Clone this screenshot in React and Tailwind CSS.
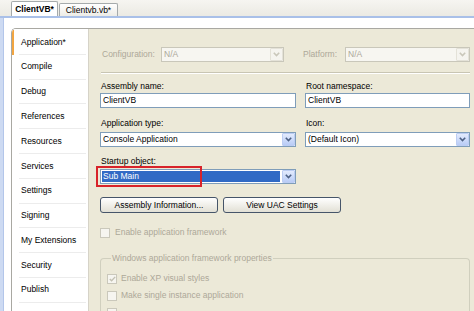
import React from 'react';

const navItems = [
  'Application*',
  'Compile',
  'Debug',
  'References',
  'Resources',
  'Services',
  'Settings',
  'Signing',
  'My Extensions',
  'Security',
  'Publish',
];

function Chevron({ color }) {
  return (
    <svg width="7" height="5" viewBox="0 0 7 5">
      <path d="M0.8 0.8 L3.5 3.6 L6.2 0.8" fill="none" stroke={color} strokeWidth="1.6" />
    </svg>
  );
}

function ArrowButton({ disabled }) {
  return (
    <div
      className={`flex w-[13px] items-center justify-center rounded-[1px] border ${
        disabled
          ? 'border-[#e4e2d8] bg-[#f5f4ef]'
          : 'border-[#bccdf3] bg-gradient-to-b from-[#e3ebfd] to-[#b9ccf6]'
      }`}
    >
      <Chevron color={disabled ? '#c9c7ba' : '#4d6185'} />
    </div>
  );
}

function Combo({ value, disabled, selected, className = '' }) {
  return (
    <div
      className={`flex h-[15px] items-stretch border ${
        disabled ? 'border-[#c9c7ba] bg-[#f7f6f1] text-[#aca899]' : 'border-[#7f9db9] bg-white'
      } ${className}`}
    >
      <div
        className={`flex flex-1 items-center ${
          selected ? 'm-[1px] mr-[2px] bg-[#316ac5] pl-[1px] text-white' : 'pl-[2px]'
        }`}
      >
        {value}
      </div>
      <ArrowButton disabled={disabled} />
    </div>
  );
}

function TextBox({ value }) {
  return (
    <div className="flex h-[15px] items-center border border-[#7f9db9] bg-white pl-[2px]">
      {value}
    </div>
  );
}

function Label({ children, className = '' }) {
  return <div className={`h-[11px] pl-[1px] leading-[11px] ${className}`}>{children}</div>;
}

function CheckBox({ checked }) {
  return (
    <div className="flex h-[10px] w-[10px] items-center justify-center border border-[#cac8bb] bg-[#f6f5f0]">
      {checked && (
        <svg width="7" height="6" viewBox="0 0 7 6">
          <path d="M0.8 3 L2.6 4.8 L6.2 0.9" fill="none" stroke="#c3c1b3" strokeWidth="1.4" />
        </svg>
      )}
    </div>
  );
}

function CheckRow({ label, checked, className = '' }) {
  return (
    <div className={`flex h-[11px] items-center gap-[4px] text-[#aca899] ${className}`}>
      <CheckBox checked={checked} />
      {label && <span className="leading-[11px]">{label}</span>}
    </div>
  );
}

function XPButton({ children }) {
  return (
    <div className="flex h-[16px] w-[118px] items-center justify-center rounded-[3px] border border-[#465569] bg-gradient-to-b from-white to-[#e2e0d5]">
      {children}
    </div>
  );
}

export default function App() {
  return (
    <div className="relative h-[311px] w-[474px] overflow-hidden bg-white font-['Liberation_Sans',Arial,sans-serif] text-[8.5px] text-black">
      {/* document tabs */}
      <div className="flex h-[16px] items-end gap-[1px] bg-gradient-to-b from-[#f6f5f1] to-[#ebeae3] pl-[11px]">
        <div className="flex h-[15px] w-[47px] items-center justify-center rounded-t-[2px] border border-b-0 border-[#a5aaab] bg-white font-bold">
          ClientVB*
        </div>
        <div className="flex h-[13px] w-[59px] items-center justify-center rounded-t-[2px] border border-b-0 border-[#a5aaab] bg-gradient-to-b from-white to-[#edece6]">
          Clientvb.vb*
        </div>
      </div>
      <div className="h-[2px] bg-[#a9c0e8]" />

      <div className="flex h-[293px]">
        <div className="w-[4px] border-r border-[#b3c6ea] bg-[#cddaf2]" />
        <div className="flex flex-1 flex-col pl-[7px] pt-[10px]">
          <div className="flex flex-1 overflow-hidden rounded-tl-[5px] border-l border-t border-[#a9a8a2]">
            {/* left navigation */}
            <nav className="w-[77px] border-r border-[#d6d3c8] bg-white pt-[1px]">
              {navItems.map((item, i) => (
                <div
                  key={item}
                  className={`h-[24.8px] pr-[2px] ${
                    i === 0 ? 'border-l-2 border-[#f2a541] pl-[5px]' : 'pl-[7px]'
                  }`}
                >
                  <div className="flex h-full items-center border-b border-[#ececec] pl-[2px]">
                    {item}
                  </div>
                </div>
              ))}
            </nav>

            {/* property page */}
            <div className="flex-1 bg-[#ece9d8] pl-[11px] pr-[4px]">
              <div className="mt-[18px] flex h-[15px] items-center pl-[2px] text-[#aca899]">
                <span className="w-[59px]">Configuration:</span>
                <Combo value="N/A" disabled className="w-[123px]" />
                <span className="ml-[19px] w-[42px]">Platform:</span>
                <Combo value="N/A" disabled className="flex-1" />
              </div>

              <div className="ml-[1px] mt-[10px] border-b border-t border-b-white border-t-[#c8c5b3]" />

              <div className="mt-[7px] flex gap-[9px]">
                <div className="w-[196px]">
                  <Label className="mb-[1px]">Assembly name:</Label>
                  <TextBox value="ClientVB" />
                </div>
                <div className="flex-1">
                  <Label className="mb-[1px]">Root namespace:</Label>
                  <TextBox value="ClientVB" />
                </div>
              </div>

              <div className="mt-[10px] flex gap-[9px]">
                <div className="w-[196px]">
                  <Label className="mb-[3px]">Application type:</Label>
                  <Combo value="Console Application" />
                </div>
                <div className="flex-1">
                  <Label className="mb-[3px]">Icon:</Label>
                  <Combo value="(Default Icon)" />
                </div>
              </div>

              <div className="mt-[9px] w-[196px]">
                <Label className="mb-[2px]">Startup object:</Label>
                <div className="relative">
                  <Combo value="Sub Main" selected />
                  <div className="absolute -left-[4px] -top-[3px] h-[21px] w-[106px] border-2 border-[#d8232a]" />
                </div>
              </div>

              <div className="mt-[13px] flex gap-[5px]">
                <XPButton>Assembly Information...</XPButton>
                <XPButton>View UAC Settings</XPButton>
              </div>

              <CheckRow label="Enable application framework" className="mt-[14px] gap-[5px]" />

              <fieldset className="mt-[14px] rounded-t-[4px] border border-b-0 border-[#d0cfbe] pl-[6px]">
                <legend className="ml-[4px] px-[1px] leading-[12px] text-[#aca899]">
                  Windows application framework properties
                </legend>
                <CheckRow label="Enable XP visual styles" checked className="mt-[9px]" />
                <CheckRow label="Make single instance application" className="mt-[6px]" />
                <CheckRow className="mt-[6px]" />
              </fieldset>
            </div>
          </div>
        </div>
      </div>
    </div>
  );
}
